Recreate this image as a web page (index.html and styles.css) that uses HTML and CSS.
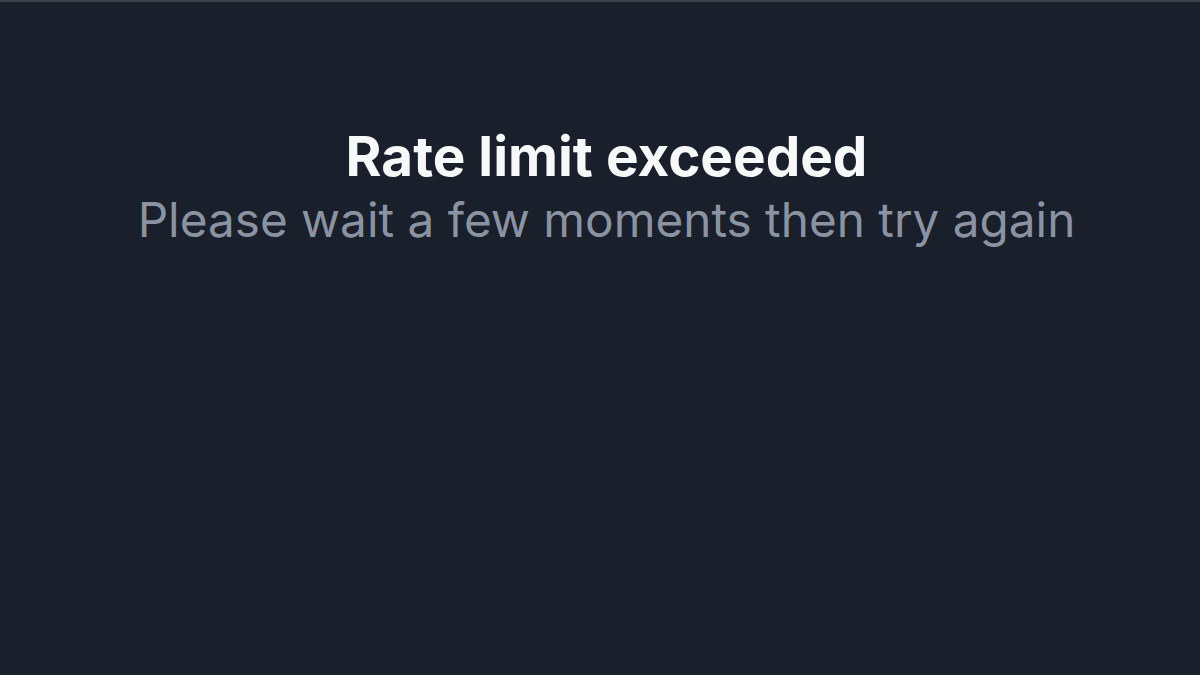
FILE: index.html
```html
<!DOCTYPE html>
<html lang="en">
<head>
<meta charset="utf-8">
<title>Rate limit exceeded</title>
<link rel="stylesheet" href="styles.css">
</head>
<body>
<main class="page">
  <div class="message">
    <h1 class="title">Rate limit exceeded</h1>
    <p class="subtitle">Please wait a few moments then try again</p>
  </div>
</main>
</body>
</html>
```

FILE: styles.css
```css
html, body {
  margin: 0;
  padding: 0;
  height: 100%;
}
body {
  background: #191f2b;
  font-family: Inter, "Noto Sans", Roboto, sans-serif;
}
.page {
  height: 100%;
  box-sizing: border-box;
  border-top: 2px solid #3c414a;
  padding-left: 13px;
  display: flex;
  justify-content: center;
}
.message {
  display: flex;
  flex-direction: column;
  align-items: center;
  padding-top: 122px;
}
.title {
  margin: 0;
  color: #f7f9f9;
  font-size: 54.8px;
  font-weight: 700;
  line-height: 64px;
  letter-spacing: 0;
}
.subtitle {
  margin: 0;
  color: #8b93a1;
  font-size: 47.7px;
  font-weight: 400;
  line-height: 64px;
}
```
